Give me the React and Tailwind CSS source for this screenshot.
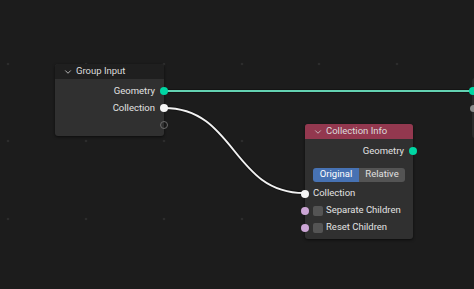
import { ChevronDown } from "lucide-react";

const font = { fontFamily: "Roboto, 'DejaVu Sans', sans-serif" };

function Socket({ className }) {
  return <span className={`absolute top-1/2 -translate-y-1/2 w-[8px] h-[8px] rounded-full ${className}`} />;
}

function Header({ title, className }) {
  return (
    <div className={`h-[15px] flex items-center gap-[3px] pl-[8px] rounded-t-[3px] text-[9.5px] text-[#dcdcdc] ${className}`}>
      <ChevronDown size={10} strokeWidth={2} className="text-[#cfcfcf]" />
      <span>{title}</span>
    </div>
  );
}

function OutRow({ label, socket, hollow }) {
  return (
    <div className="relative h-[17px] flex items-center justify-end pr-[9px] text-[9.5px] text-[#e2e2e2]">
      {label}
      <Socket
        className={`-right-[4px] ${hollow ? "border border-[#6a6a6a] bg-transparent" : socket}`}
      />
    </div>
  );
}

function InRow({ label, socket, check }) {
  return (
    <div className="relative h-[17px] flex items-center gap-[3px] pl-[8px] text-[9.5px] text-[#e2e2e2]">
      {check && <span className="w-[10px] h-[10px] rounded-[2px] bg-[#545454]" />}
      <span>{label}</span>
      <Socket className={`-left-[4px] ${socket}`} />
    </div>
  );
}

function Dots() {
  const xs = [8, 86, 164, 242, 319, 397];
  const ys = [64, 141, 219];
  return (
    <svg className="absolute inset-0" width="474" height="289">
      {ys.map((y) =>
        xs.map((x) => <circle key={`${x}-${y}`} cx={x} cy={y} r="1.3" fill="#2c2c2c" />)
      )}
    </svg>
  );
}

function Wires() {
  return (
    <svg className="absolute inset-0" width="474" height="289">
      <line x1="164" y1="91" x2="474" y2="91" stroke="#141414" strokeWidth="4" />
      <line x1="164" y1="91" x2="474" y2="91" stroke="#63d1b2" strokeWidth="2" />
      <path d="M164 108 C 236 108, 232 193, 304 193" fill="none" stroke="#141414" strokeWidth="4" />
      <path d="M164 108 C 236 108, 232 193, 304 193" fill="none" stroke="#f2f2f2" strokeWidth="2" />
    </svg>
  );
}

export default function App() {
  return (
    <div className="relative w-[474px] h-[289px] overflow-hidden bg-[#1c1c1c]" style={font}>
      <Dots />
      <Wires />

      {/* node cut off at right edge */}
      <div className="absolute left-[472px] top-[78px] w-[20px] h-[60px] rounded-[3px] bg-[#2a2a2a]" />
      <span className="absolute left-[469px] top-[87px] w-[8px] h-[8px] rounded-full bg-[#00d6a3]" />
      <span className="absolute left-[470px] top-[105px] w-[7px] h-[7px] rounded-full bg-[#8a8a8a]" />

      <div className="absolute left-[55px] top-[64px] w-[109px] h-[72px] rounded-[3px] bg-[#303030] shadow-[0_1px_3px_rgba(0,0,0,0.6)]">
        <Header title="Group Input" className="bg-[#1f1f1f]" />
        <div className="pt-[3.5px]">
          <OutRow label="Geometry" socket="bg-[#00d6a3]" />
          <OutRow label="Collection" socket="bg-[#f5f5f5]" />
          <OutRow label="" hollow />
        </div>
      </div>

      <div className="absolute left-[305px] top-[124px] w-[108px] h-[115px] rounded-[3px] bg-[#303030] shadow-[0_1px_3px_rgba(0,0,0,0.6)]">
        <Header title="Collection Info" className="bg-[#93384f]" />
        <div className="pt-[3.5px]">
          <OutRow label="Geometry" socket="bg-[#00d6a3]" />
          <div className="mt-[8px] mx-[8px] h-[14px] flex text-[9.5px] rounded-[3px] overflow-hidden">
            <div className="flex-1 flex items-center justify-center bg-[#4772b3] text-white">Original</div>
            <div className="flex-1 flex items-center justify-center bg-[#545454] text-[#e0e0e0]">Relative</div>
          </div>
          <div className="mt-[3.5px]">
            <InRow label="Collection" socket="bg-[#f5f5f5]" />
            <InRow label="Separate Children" socket="bg-[#cca6d6]" check />
            <InRow label="Reset Children" socket="bg-[#cca6d6]" check />
          </div>
        </div>
      </div>
    </div>
  );
}
